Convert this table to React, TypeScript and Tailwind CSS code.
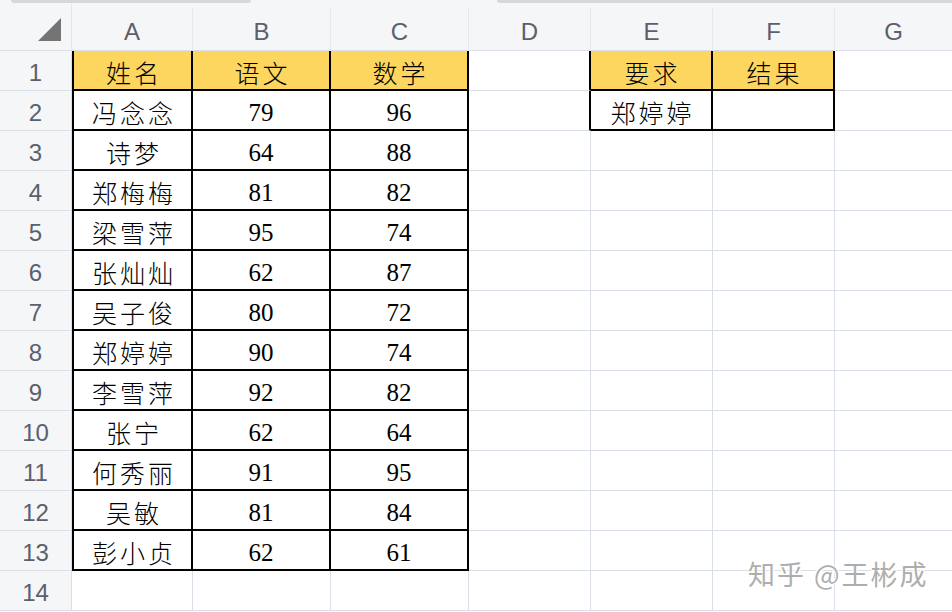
const COLS = ['A', 'B', 'C', 'D', 'E', 'F', 'G'];

const rows: string[][] = [
  ['姓名', '语文', '数学', '', '要求', '结果', ''],
  ['冯念念', '79', '96', '', '郑婷婷', '', ''],
  ['诗梦', '64', '88', '', '', '', ''],
  ['郑梅梅', '81', '82', '', '', '', ''],
  ['梁雪萍', '95', '74', '', '', '', ''],
  ['张灿灿', '62', '87', '', '', '', ''],
  ['吴子俊', '80', '72', '', '', '', ''],
  ['郑婷婷', '90', '74', '', '', '', ''],
  ['李雪萍', '92', '82', '', '', '', ''],
  ['张宁', '62', '64', '', '', '', ''],
  ['何秀丽', '91', '95', '', '', '', ''],
  ['吴敏', '81', '84', '', '', '', ''],
  ['彭小贞', '62', '61', '', '', '', ''],
  ['', '', '', '', '', '', ''],
];

const GRID = 'grid grid-cols-[72px_121px_138px_138px_122px_122px_122px_1fr]';

function inMain(r: number, c: number) {
  return r >= 1 && r <= 13 && c <= 2;
}
function inSide(r: number, c: number) {
  return r >= 1 && r <= 2 && (c === 4 || c === 5);
}

function Cell({ r, c, text }: { r: number; c: number; text: string }) {
  const boxed = inMain(r, c) || inSide(r, c);
  const yellow = r === 1 && boxed;
  const rightBlack = boxed || (c === 3 && r <= 2);
  const isNum = /^\d+$/.test(text);

  return (
    <div
      className={[
        'h-[40px] flex items-center justify-center overflow-hidden',
        yellow ? 'bg-[#fdd65f]' : 'bg-white',
        rightBlack ? 'border-r-2 border-r-black' : c === 6 ? '' : 'border-r border-r-[#d9dee7]',
        boxed ? 'border-b-2 border-b-black' : 'border-b border-b-[#d9dee7]',
        c === 0 && boxed ? 'border-l-2 border-l-black' : '',
        isNum
          ? "font-['Liberation_Serif',serif] text-[25px]"
          : "font-['Noto_Sans_CJK_SC',sans-serif] text-[25px] tracking-[3px] font-light",
        'text-black',
      ].join(' ')}
    >
      <span className={isNum ? 'pt-[5px]' : 'pt-[5px] pl-[3px]'}>{text}</span>
    </div>
  );
}

export default function App() {
  return (
    <div className="relative w-[952px] h-[612px] overflow-hidden bg-white font-['Liberation_Sans',sans-serif]">
      {/* tab strip edge */}
      <div className="flex h-[4px] bg-[#f5f6f8]">
        <div className="ml-[11px] w-[240px] h-[3px] rounded-b-[3px] bg-[#d6d7d9]" />
        <div className="ml-[246px] flex-1 h-[3px] rounded-bl-[3px] bg-[#d6d7d9]" />
      </div>

      {/* column header */}
      <div className={`${GRID} h-[47px] bg-[#f5f6f8] border-b border-b-[#d9dee7]`}>
        <div className="relative border-r border-r-[#e3e6eb]">
          <svg className="absolute left-[38px] top-[14px]" width="24" height="23" viewBox="0 0 24 23">
            <polygon points="0,23 23,0 23,23" fill="#747474" />
          </svg>
        </div>
        {COLS.map((c, i) => (
          <div
            key={c}
            className={`flex items-center justify-center pt-[6px] text-[24px] text-[#5a606c] ${
              i === 6 ? '' : 'border-r border-r-[#e6e8ec] mt-[4px] pb-[4px]'
            }`}
          >
            {c}
          </div>
        ))}
      </div>

      {/* body */}
      {rows.map((row, ri) => {
        const r = ri + 1;
        return (
          <div key={r} className={GRID}>
            <div className="h-[40px] flex items-center justify-center pt-[5px] bg-[#f5f6f8] border-r border-r-[#d9dee7] border-b border-b-[#d9dee7] text-[24px] text-[#5a606c]">
              {r}
            </div>
            {row.map((t, c) => (
              <Cell key={c} r={r} c={c} text={t} />
            ))}
          </div>
        );
      })}

      {/* watermark */}
      <div className="absolute left-[748px] top-[554px] font-['Noto_Sans_CJK_SC',sans-serif] text-[27px] tracking-[2px] text-[#aeaeae] [text-shadow:1px_1px_0_#ffffff,-1px_-1px_0_#ffffff,1px_-1px_0_#ffffff,-1px_1px_0_#ffffff]">
        知乎 @王彬成
      </div>
    </div>
  );
}
